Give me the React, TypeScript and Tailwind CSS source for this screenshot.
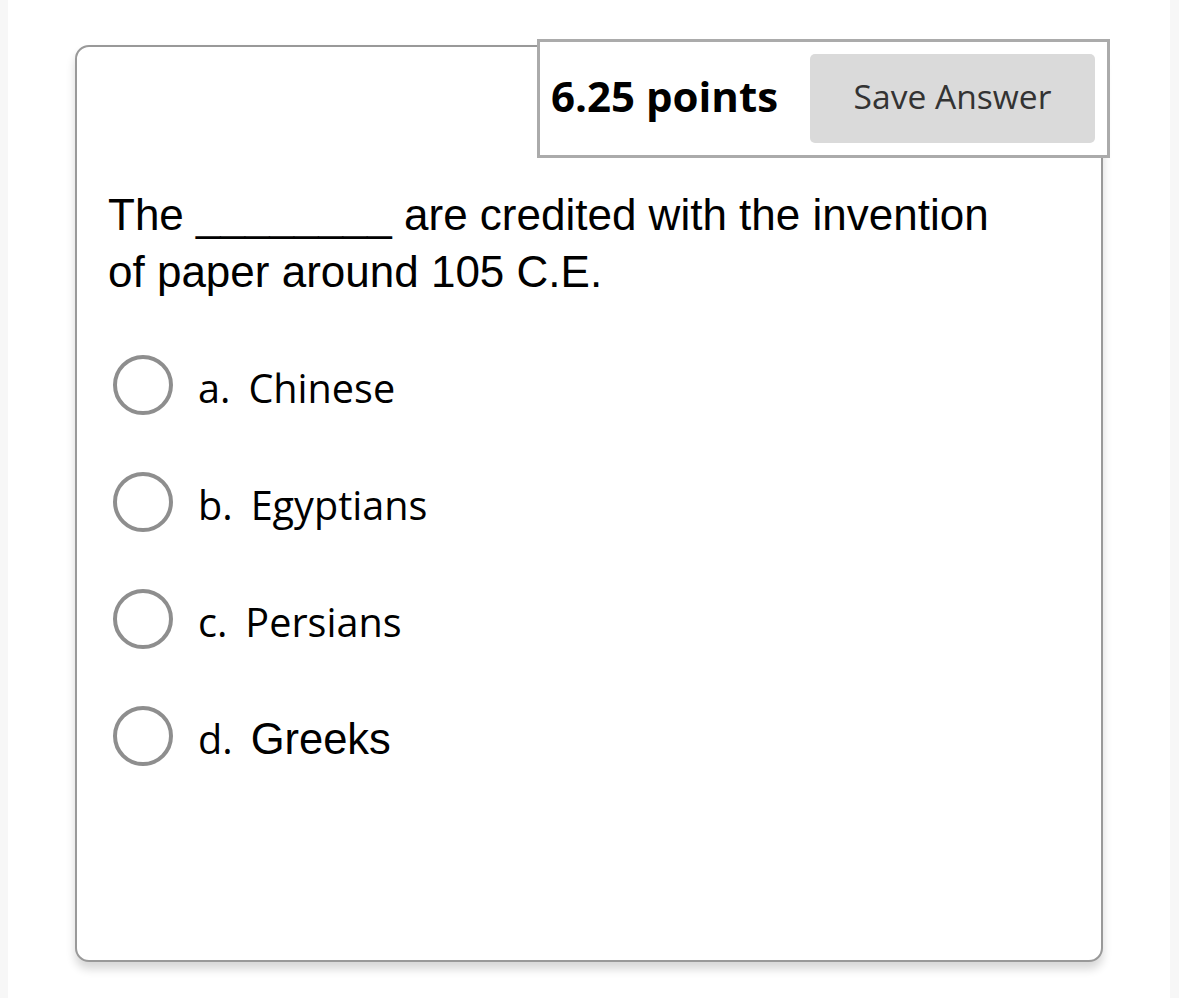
import React from "react";

const OS = "font-['Open_Sans',sans-serif]";
const LS = "font-['Liberation_Sans',Arial,sans-serif]";

function Option({ letter, children }: { letter: string; children: React.ReactNode }) {
  return (
    <div className="flex h-[117px] items-center">
      <div className="ml-[36px] h-[60px] w-[60px] shrink-0 rounded-full border-[4px] border-[#8e8e8e] bg-white" />
      <div className={`ml-[25px] pt-[8px] text-[39.6px] leading-[1.3] text-black ${OS}`}>
        <span>{letter}</span>
        <span className="ml-[18px]">{children}</span>
      </div>
    </div>
  );
}

export default function App() {
  return (
    <div className="flex h-[998px] w-full bg-white">
      <div className="w-[8px] bg-[#f7f7f7]" />
      <div className="flex-1 bg-white pl-[67px] pt-[45px]">
        <div className="box-border flex h-[917px] w-[1028px] flex-col rounded-[14px] border-2 border-[#999999] bg-white shadow-[0_7px_10px_rgba(0,0,0,0.16)]">
          <div className="-mr-[9px] -mt-[8px] flex justify-end">
            <div className="box-border flex h-[119px] w-[573px] items-center justify-between border-[3px] border-[#ababab] bg-white py-[12px] pl-[11px] pr-[12px]">
              <span className={`pb-[5px] text-[42px] font-bold leading-none text-black ${OS}`}>6.25 points</span>
              <button className={`flex h-[89px] w-[285px] items-center justify-center rounded-[5px] bg-[#dadada] pb-[5px] text-[33.6px] text-[#333333] ${OS}`}>
                Save Answer
              </button>
            </div>
          </div>
          <p className={`ml-[31px] mt-[28px] w-[905px] text-[44px] leading-[57px] text-black ${LS}`}>
            The ________ are credited with the invention of paper around 105 C.E.
          </p>
          <div className="mt-[26px] flex flex-col">
            <Option letter="a.">Chinese</Option>
            <Option letter="b.">Egyptians</Option>
            <Option letter="c.">Persians</Option>
            <Option letter="d.">
              <span className={`text-[43.5px] ${LS}`}>Greeks</span>
            </Option>
          </div>
        </div>
      </div>
      <div className="w-[9px] bg-[#f7f7f7]" />
    </div>
  );
}
